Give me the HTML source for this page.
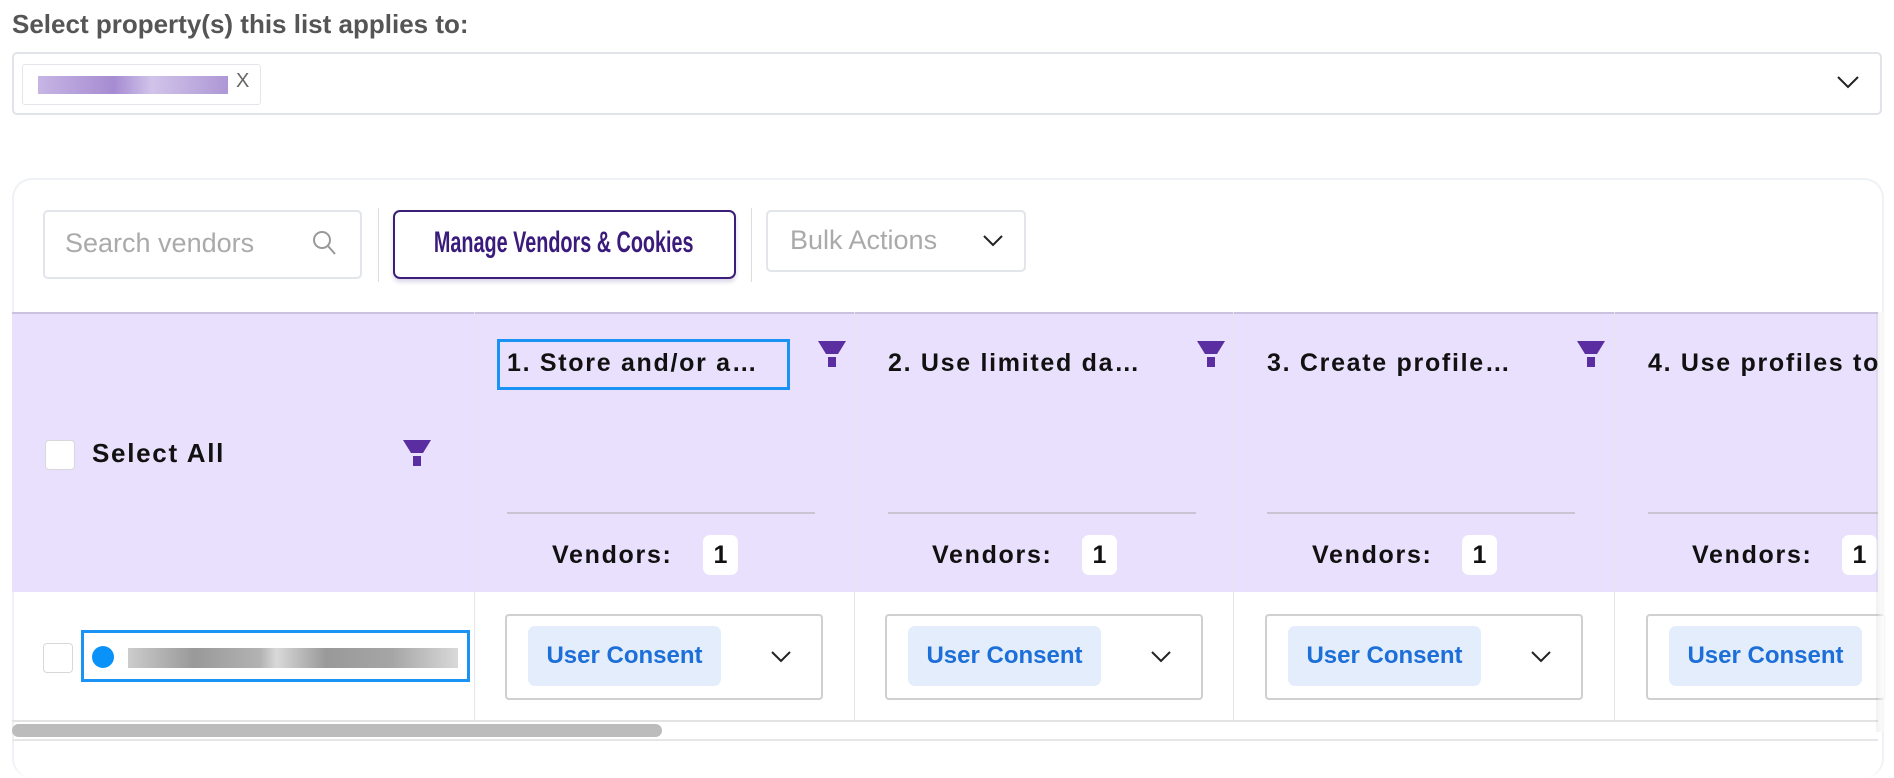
<!DOCTYPE html>
<html><head><meta charset="utf-8"><style>
*{box-sizing:border-box;margin:0;padding:0}
body{width:1894px;height:746px;overflow:hidden;background:#fff;font-family:"Liberation Sans",sans-serif;position:relative}
.a{position:absolute}
.lbl{left:12px;top:9px;font-size:26px;font-weight:bold;color:#555;white-space:nowrap}
.sel{left:12px;top:52px;width:1870px;height:63px;border:2px solid #e0e4e8;border-radius:5px}
.chip{left:22px;top:64px;width:239px;height:41px;border:1px solid #e3e6ea;border-radius:3px}
.card{left:12px;top:178px;width:1872px;height:600px;border:2px solid #eef1f5;border-radius:20px;border-bottom:none}
.box{border:2px solid #e2e5e9;border-radius:5px}
.hdr{left:12px;top:312px;width:1866px;height:280px;background:#e8e0fc;border-top:2px solid #cbc2e0}
.vl{width:1px;background:#e4e4ea}
.t{font-weight:bold;font-size:25px;color:#111;letter-spacing:1.7px;white-space:nowrap}
.cb{width:30px;height:30px;background:#fff;border:1px solid #d8d8dc;border-radius:4px}
.badge{width:35px;height:40px;background:#fff;border-radius:7px;text-align:center;line-height:40px;letter-spacing:0}
.dd{width:318px;height:86px;border:2px solid #d0d0d0;border-radius:4px;background:#fff}
.pill{width:193px;height:60px;background:#e3edfc;border-radius:7px;color:#1c6ed8;font-weight:bold;font-size:24px;text-align:center;line-height:60px}
</style></head><body>
<div class="a lbl">Select property(s) this list applies to:</div>
<div class="a sel"></div>
<div class="a chip"></div>
<div class="a" style="left:38px;top:76px;width:190px;height:18px;background:linear-gradient(90deg,#b9a3dd,#8f6fc6 40%,#c5b5e4 60%,#9a7dcb);opacity:.8"></div>
<div class="a" style="left:236px;top:70px;font-size:20px;color:#666">X</div>
<svg class="a" style="left:1836px;top:74px" width="24" height="16"><path d="M2 3 L12 13 L22 3" fill="none" stroke="#222" stroke-width="2"/></svg>

<div class="a card"></div>
<div class="a box" style="left:43px;top:210px;width:319px;height:69px"></div>
<div class="a" style="left:65px;top:228px;font-size:27px;color:#aaa">Search vendors</div>
<svg class="a" style="left:312px;top:230px" width="26" height="28"><circle cx="10" cy="10" r="8" fill="none" stroke="#999" stroke-width="2"/><path d="M16 16 L23 24" stroke="#999" stroke-width="2"/></svg>
<div class="a vl" style="left:378px;top:208px;height:74px;background:#ddd"></div>
<div class="a" style="left:393px;top:210px;width:343px;height:69px;border:2px solid #3b1e78;border-radius:7px;box-shadow:0 3px 4px rgba(80,50,140,.2)"></div>
<div class="a" style="left:264px;top:226px;width:600px;text-align:center;color:#3a1b7c;font-size:30px;font-weight:bold;white-space:nowrap"><span style="display:inline-block;transform:scaleX(0.66)">Manage Vendors &amp; Cookies</span></div>
<div class="a vl" style="left:751px;top:208px;height:74px;background:#ddd"></div>
<div class="a box" style="left:766px;top:210px;width:260px;height:62px"></div>
<div class="a" style="left:790px;top:225px;font-size:27px;color:#aaa">Bulk Actions</div>
<svg class="a" style="left:982px;top:234px" width="22" height="14"><path d="M2 2 L11 11 L20 2" fill="none" stroke="#222" stroke-width="2"/></svg>

<div class="a hdr"></div>
<div class="a" style="left:12px;top:592px;width:1866px;height:130px;border-bottom:2px solid #e3e3e6"></div>
<div class="a vl" style="left:474px;top:312px;height:410px"></div>
<div class="a vl" style="left:854px;top:312px;height:410px"></div>
<div class="a vl" style="left:1233px;top:312px;height:410px"></div>
<div class="a vl" style="left:1614px;top:312px;height:410px"></div>

<div class="a cb" style="left:45px;top:440px"></div>
<div class="a t" style="left:92px;top:438px;font-size:26px">Select All</div>
<svg class="a" style="left:403px;top:440px" width="28" height="28"><path d="M0 0 H28 L20 13 H8 Z" fill="#5a2ea0"/><rect x="10" y="16" width="8" height="10" fill="#5a2ea0"/></svg>

<div class="a" style="left:497px;top:339px;width:293px;height:51px;border:3px solid #1a93f5"></div>
<div class="a t" style="left:507px;top:349px">1. Store and/or a…</div>
<div class="a t" style="left:888px;top:349px">2. Use limited da…</div>
<div class="a t" style="left:1267px;top:349px">3. Create profile…</div>
<div class="a t" style="left:1648px;top:349px">4. Use profiles to</div>

<svg class="a" style="left:818px;top:341px" width="28" height="28"><path d="M0 0 H28 L20 13 H8 Z" fill="#5a2ea0"/><rect x="10" y="16" width="8" height="10" fill="#5a2ea0"/></svg>
<svg class="a" style="left:1197px;top:341px" width="28" height="28"><path d="M0 0 H28 L20 13 H8 Z" fill="#5a2ea0"/><rect x="10" y="16" width="8" height="10" fill="#5a2ea0"/></svg>
<svg class="a" style="left:1577px;top:341px" width="28" height="28"><path d="M0 0 H28 L20 13 H8 Z" fill="#5a2ea0"/><rect x="10" y="16" width="8" height="10" fill="#5a2ea0"/></svg>

<div class="a" style="left:507px;top:512px;width:308px;height:2px;background:#c9c4d2"></div>
<div class="a" style="left:888px;top:512px;width:308px;height:2px;background:#c9c4d2"></div>
<div class="a" style="left:1267px;top:512px;width:308px;height:2px;background:#c9c4d2"></div>
<div class="a" style="left:1648px;top:512px;width:230px;height:2px;background:#c9c4d2"></div>

<div class="a t" style="left:552px;top:541px">Vendors:</div><div class="a badge t" style="left:703px;top:535px">1</div>
<div class="a t" style="left:932px;top:541px">Vendors:</div><div class="a badge t" style="left:1082px;top:535px">1</div>
<div class="a t" style="left:1312px;top:541px">Vendors:</div><div class="a badge t" style="left:1462px;top:535px">1</div>
<div class="a t" style="left:1692px;top:541px">Vendors:</div><div class="a badge t" style="left:1842px;top:535px">1</div>

<div class="a cb" style="left:43px;top:643px"></div>
<div class="a" style="left:81px;top:630px;width:389px;height:52px;border:3px solid #1a93f5"></div>
<div class="a" style="left:92px;top:646px;width:22px;height:22px;border-radius:50%;background:#0a92f8"></div>
<div class="a" style="left:128px;top:648px;width:330px;height:20px;background:linear-gradient(90deg,#bbb,#777 20%,#999 40%,#ccc 45%,#777 60%,#888 80%,#ccc);opacity:.75"></div>

<div class="a dd" style="left:505px;top:614px"></div><div class="a pill" style="left:528px;top:626px">User Consent</div>
<svg class="a" style="left:770px;top:650px" width="22" height="14"><path d="M2 2 L11 11 L20 2" fill="none" stroke="#222" stroke-width="2"/></svg>
<div class="a dd" style="left:885px;top:614px"></div><div class="a pill" style="left:908px;top:626px">User Consent</div>
<svg class="a" style="left:1150px;top:650px" width="22" height="14"><path d="M2 2 L11 11 L20 2" fill="none" stroke="#222" stroke-width="2"/></svg>
<div class="a dd" style="left:1265px;top:614px"></div><div class="a pill" style="left:1288px;top:626px">User Consent</div>
<svg class="a" style="left:1530px;top:650px" width="22" height="14"><path d="M2 2 L11 11 L20 2" fill="none" stroke="#222" stroke-width="2"/></svg>
<div class="a dd" style="left:1646px;top:614px;width:240px"></div><div class="a pill" style="left:1669px;top:626px">User Consent</div>
<div class="a" style="left:1876px;top:312px;width:10px;height:420px;background:linear-gradient(90deg,rgba(0,0,0,.05),rgba(255,255,255,1))"></div>

<div class="a" style="left:12px;top:724px;width:650px;height:13px;background:#bcbcbc;border-radius:7px"></div>
<div class="a" style="left:12px;top:739px;width:1866px;height:2px;background:#e6e6e6"></div>
</body></html>
